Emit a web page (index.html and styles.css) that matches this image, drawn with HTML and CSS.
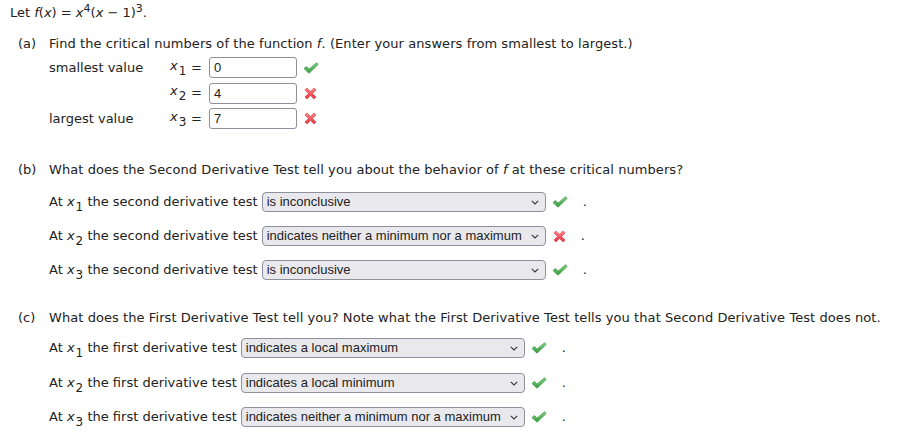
FILE: index.html
```html
<!DOCTYPE html>
<html>
<head>
  <meta charset="UTF-8">
  <title>Critical Numbers</title>
  <link rel="stylesheet" href="styles.css">
</head>
<body>
  <svg width="0" height="0" class="defs">
    <defs>
      <linearGradient id="gCheck" x1="0" y1="0" x2="0" y2="1">
        <stop offset="0" stop-color="#8fd68a"/>
        <stop offset="1" stop-color="#2f9a3a"/>
      </linearGradient>
      <linearGradient id="gCross" x1="0" y1="0" x2="0" y2="1">
        <stop offset="0" stop-color="#ff8a8a"/>
        <stop offset="1" stop-color="#e3313d"/>
      </linearGradient>
      <symbol id="check" viewBox="0 0 16 12">
        <path d="M1 6.5 L3.5 4.5 L6 7.2 L13.5 0.8 L15.2 2.4 L6 11.2 Z" fill="url(#gCheck)" stroke="#3c9a44" stroke-width="0.8" stroke-linejoin="round"/>
      </symbol>
      <symbol id="cross" viewBox="0 0 14 14">
        <path d="M1 3.2 L3.2 1 L7 4.8 L10.8 1 L13 3.2 L9.2 7 L13 10.8 L10.8 13 L7 9.2 L3.2 13 L1 10.8 L4.8 7 Z" fill="url(#gCross)" stroke="#e2404b" stroke-width="0.7" stroke-linejoin="round"/>
      </symbol>
    </defs>
  </svg>

  <p class="intro">Let <i>f</i>(<i>x</i>) = <i>x</i><sup>4</sup>(<i>x</i> &minus; 1)<sup>3</sup>.</p>

  <!-- part a -->
  <div class="part part-a">
    <div class="part-head">
      <span class="part-label">(a)</span>
      <span>Find the critical numbers of the function <i>f</i>. (Enter your answers from smallest to largest.)</span>
    </div>
    <div class="crit-grid">
      <span class="crit-label">smallest value</span>
      <span class="var"><i>x</i><sub>1</sub></span>
      <span class="eq">=</span>
      <input class="answer" type="text" value="0">
      <svg class="mark"><use href="#check"/></svg>

      <span class="crit-label"></span>
      <span class="var"><i>x</i><sub>2</sub></span>
      <span class="eq">=</span>
      <input class="answer" type="text" value="4">
      <svg class="mark cross"><use href="#cross"/></svg>

      <span class="crit-label">largest value</span>
      <span class="var"><i>x</i><sub>3</sub></span>
      <span class="eq">=</span>
      <input class="answer" type="text" value="7">
      <svg class="mark cross"><use href="#cross"/></svg>
    </div>
  </div>

  <!-- part b -->
  <div class="part part-b">
    <div class="part-head">
      <span class="part-label">(b)</span>
      <span>What does the Second Derivative Test tell you about the behavior of <i>f</i> at these critical numbers?</span>
    </div>
    <div class="test-rows">
      <div class="test-row">
        <span>At <i>x</i><sub>1</sub> the second derivative test</span>
        <span class="select-wrap">
          <select><option>is inconclusive</option></select>
          <svg class="chevron" viewBox="0 0 8 5"><path d="M0.8 0.8 L4 4 L7.2 0.8" fill="none" stroke="#333" stroke-width="1.1"/></svg>
        </span>
        <svg class="mark"><use href="#check"/></svg>
        <span class="dot">.</span>
      </div>
      <div class="test-row">
        <span>At <i>x</i><sub>2</sub> the second derivative test</span>
        <span class="select-wrap">
          <select><option>indicates neither a minimum nor a maximum</option></select>
          <svg class="chevron" viewBox="0 0 8 5"><path d="M0.8 0.8 L4 4 L7.2 0.8" fill="none" stroke="#333" stroke-width="1.1"/></svg>
        </span>
        <svg class="mark cross"><use href="#cross"/></svg>
        <span class="dot">.</span>
      </div>
      <div class="test-row">
        <span>At <i>x</i><sub>3</sub> the second derivative test</span>
        <span class="select-wrap">
          <select><option>is inconclusive</option></select>
          <svg class="chevron" viewBox="0 0 8 5"><path d="M0.8 0.8 L4 4 L7.2 0.8" fill="none" stroke="#333" stroke-width="1.1"/></svg>
        </span>
        <svg class="mark"><use href="#check"/></svg>
        <span class="dot">.</span>
      </div>
    </div>
  </div>

  <!-- part c -->
  <div class="part part-c">
    <div class="part-head">
      <span class="part-label">(c)</span>
      <span>What does the First Derivative Test tell you? Note what the First Derivative Test tells you that Second Derivative Test does not.</span>
    </div>
    <div class="test-rows">
      <div class="test-row">
        <span>At <i>x</i><sub>1</sub> the first derivative test</span>
        <span class="select-wrap">
          <select><option>indicates a local maximum</option></select>
          <svg class="chevron" viewBox="0 0 8 5"><path d="M0.8 0.8 L4 4 L7.2 0.8" fill="none" stroke="#333" stroke-width="1.1"/></svg>
        </span>
        <svg class="mark"><use href="#check"/></svg>
        <span class="dot">.</span>
      </div>
      <div class="test-row">
        <span>At <i>x</i><sub>2</sub> the first derivative test</span>
        <span class="select-wrap">
          <select><option>indicates a local minimum</option></select>
          <svg class="chevron" viewBox="0 0 8 5"><path d="M0.8 0.8 L4 4 L7.2 0.8" fill="none" stroke="#333" stroke-width="1.1"/></svg>
        </span>
        <svg class="mark"><use href="#check"/></svg>
        <span class="dot">.</span>
      </div>
      <div class="test-row">
        <span>At <i>x</i><sub>3</sub> the first derivative test</span>
        <span class="select-wrap">
          <select><option>indicates neither a minimum nor a maximum</option></select>
          <svg class="chevron" viewBox="0 0 8 5"><path d="M0.8 0.8 L4 4 L7.2 0.8" fill="none" stroke="#333" stroke-width="1.1"/></svg>
        </span>
        <svg class="mark"><use href="#check"/></svg>
        <span class="dot">.</span>
      </div>
    </div>
  </div>
</body>
</html>
```

FILE: styles.css
```css
body {
  margin: 0;
  padding: 5px 10px;
  font-family: "DejaVu Sans", Verdana, sans-serif;
  font-size: 13px;
  line-height: 16px;
  color: #222;
  background: #fff;
}

.defs {
  position: absolute;
}

sup {
  font-size: 11px;
  line-height: 0;
  vertical-align: 5px;
}

sub {
  font-size: 12px;
  line-height: 0;
  vertical-align: -5px;
  margin-left: 1px;
}

.intro {
  margin: 0;
}

.part {
  padding-left: 8px;
}

.part-head {
  display: flex;
  letter-spacing: 0.07px;
}

.part-label {
  width: 31px;
  flex-shrink: 0;
  letter-spacing: 0;
}

.part-a {
  margin-top: 15px;
}

.part-b {
  margin-top: 33px;
}

.part-c {
  margin-top: 30px;
}

/* part a grid */
.crit-grid {
  display: grid;
  grid-template-columns: 121px 23px 16px 88px 21px;
  grid-auto-rows: 21px;
  row-gap: 4.5px;
  align-items: center;
  margin-top: 5px;
  margin-left: 31px;
}

.var {
  position: relative;
  top: -2px;
}

.eq {
  margin-left: -2px;
}

.answer {
  box-sizing: border-box;
  width: 88px;
  height: 21px;
  margin: 0;
  padding: 0 4px;
  border: 1px solid #8f8f9d;
  border-radius: 3px;
  font-family: "Liberation Sans", Arial, sans-serif;
  font-size: 13px;
  color: #222;
  background: #fff;
}

.mark {
  width: 16px;
  height: 12px;
  margin-left: 6px;
}

.mark.cross {
  width: 13px;
  height: 13px;
  margin-left: 7px;
}

/* parts b and c */
.test-rows {
  display: flex;
  flex-direction: column;
  gap: 14px;
  margin-top: 14px;
  margin-left: 31px;
}

.part-c .test-rows {
  margin-top: 12px;
  gap: 14.5px;
}

.test-row {
  display: flex;
  align-items: center;
  height: 20px;
}

.test-row > span:first-child {
  position: relative;
  top: 0;
  margin-right: 4px;
}

.select-wrap {
  position: relative;
  display: inline-block;
  width: 284px;
  height: 20px;
}

.select-wrap select {
  appearance: none;
  -webkit-appearance: none;
  box-sizing: border-box;
  width: 100%;
  height: 20px;
  margin: 0;
  padding: 0 20px 1px 4px;
  border: 1px solid #8f8f9d;
  border-radius: 4px;
  background: #e9e9ed;
  font-family: "Liberation Sans", Arial, sans-serif;
  font-size: 13px;
  color: #222;
}

.chevron {
  position: absolute;
  right: 7px;
  top: 8px;
  width: 8px;
  height: 5px;
  pointer-events: none;
}

.dot {
  margin-left: 15px;
}
```
